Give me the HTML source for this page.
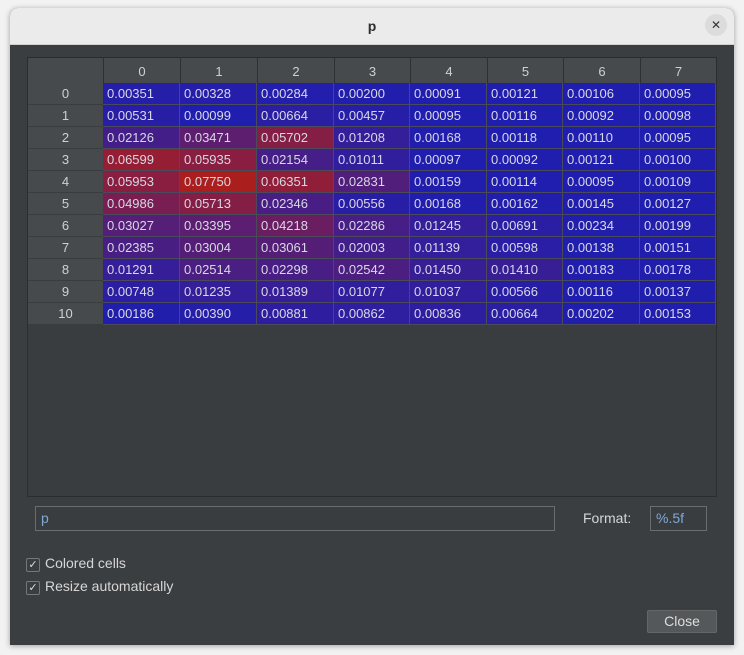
<!DOCTYPE html>
<html><head><style>
html,body{margin:0;width:744px;height:655px;background:#f2f2f2;overflow:hidden;font-family:"Liberation Sans",sans-serif;}
.win{position:absolute;left:10px;top:8px;width:724px;height:637px;background:#3b3e41;border-radius:8px 8px 0 0;overflow:hidden;box-shadow:0 1px 6px rgba(0,0,0,.35);}
.tb{position:absolute;left:0;top:0;width:724px;height:36px;background:#ebebeb;border-bottom:1px solid #d0d0d0;}
.tb .t{position:absolute;left:0;right:0;top:10px;text-align:center;font-weight:bold;font-size:14px;color:#2e2e2e;}
.tb .x{position:absolute;left:695px;top:6px;width:22px;height:22px;border-radius:50%;background:#dcdcdc;color:#333;font-size:12px;text-align:center;line-height:22px;}
.c{position:absolute;height:21px;line-height:21px;font-size:13px;color:#d8d8e4;box-sizing:border-box;}
.h{background:#474a4d;text-align:center;color:#d0d0d0;}
.d{padding-left:4px;border-right:1px solid #4a4a5a;border-bottom:1px solid #4a4a5a;}
.inp{position:absolute;box-sizing:border-box;border:1px solid #6a6d70;background:#3a3d40;color:#7fa8d8;font-size:14px;line-height:22px;padding-left:5px;height:25px;}
.lbl{position:absolute;color:#d6d6d6;font-size:14px;}
.cb{position:absolute;width:12px;height:12px;border:1px solid #777;border-radius:2px;color:#ddd;font-size:11px;line-height:12px;text-align:center;}
.btn{position:absolute;left:647px;top:610px;width:70px;height:23px;background:#55585b;border:1px solid #666;border-radius:2px;color:#ddd;font-size:14px;line-height:21px;text-align:center;box-sizing:border-box;}
</style></head><body>
<div class="win">
<div class="tb"><div class="t">p</div><div class="x">✕</div></div>
</div>
<div id="t" style="position:absolute;left:28px;top:58px;width:688px;height:438px;background:#3a3d40;outline:1px solid #2a2c2e;"></div>
<div class="inp" style="left:35px;top:506px;width:520px;">p</div>
<div class="lbl" style="left:583px;top:510px;">Format:</div>
<div class="inp" style="left:650px;top:506px;width:57px;">%.5f</div>
<div class="cb" style="left:26px;top:558px;">✓</div><div class="lbl" style="left:45px;top:555px;">Colored cells</div>
<div class="cb" style="left:26px;top:581px;">✓</div><div class="lbl" style="left:45px;top:578px;">Resize automatically</div>
<div class="btn">Close</div>
<script>
var D=[
[0.00351,0.00328,0.00284,0.00200,0.00091,0.00121,0.00106,0.00095],
[0.00531,0.00099,0.00664,0.00457,0.00095,0.00116,0.00092,0.00098],
[0.02126,0.03471,0.05702,0.01208,0.00168,0.00118,0.00110,0.00095],
[0.06599,0.05935,0.02154,0.01011,0.00097,0.00092,0.00121,0.00100],
[0.05953,0.07750,0.06351,0.02831,0.00159,0.00114,0.00095,0.00109],
[0.04986,0.05713,0.02346,0.00556,0.00168,0.00162,0.00145,0.00127],
[0.03027,0.03395,0.04218,0.02286,0.01245,0.00691,0.00234,0.00199],
[0.02385,0.03004,0.03061,0.02003,0.01139,0.00598,0.00138,0.00151],
[0.01291,0.02514,0.02298,0.02542,0.01450,0.01410,0.00183,0.00178],
[0.00748,0.01235,0.01389,0.01077,0.01037,0.00566,0.00116,0.00137],
[0.00186,0.00390,0.00881,0.00862,0.00836,0.00664,0.00202,0.00153]];
var X=[75,152,229,306,382,459,535,612,688];var h='';
h+='<div class="c h" style="left:0;top:0;width:75px;height:25px"></div>';
for(var j=0;j<8;j++)h+='<div class="c h" style="left:'+X[j]+'px;top:0;width:'+(X[j+1]-X[j])+'px;height:25px;line-height:28px;border-left:1px solid #2e3032">'+j+'</div>';
for(var i=0;i<11;i++){var y=25+i*22;
h+='<div class="c h" style="left:0;top:'+y+'px;width:75px;height:22px;border-bottom:1px solid #3a3d40">'+i+'</div>';
for(var j=0;j<8;j++){var t=D[i][j]/0.0775;var r=Math.round(30+t*140),g=30,b=Math.round(176-t*146);
h+='<div class="c d" style="left:'+X[j]+'px;top:'+y+'px;width:'+(X[j+1]-X[j])+'px;height:22px;background:rgb('+r+','+g+','+b+')">'+D[i][j].toFixed(5)+'</div>';}}
document.getElementById('t').innerHTML=h;
</script>
</body></html>
